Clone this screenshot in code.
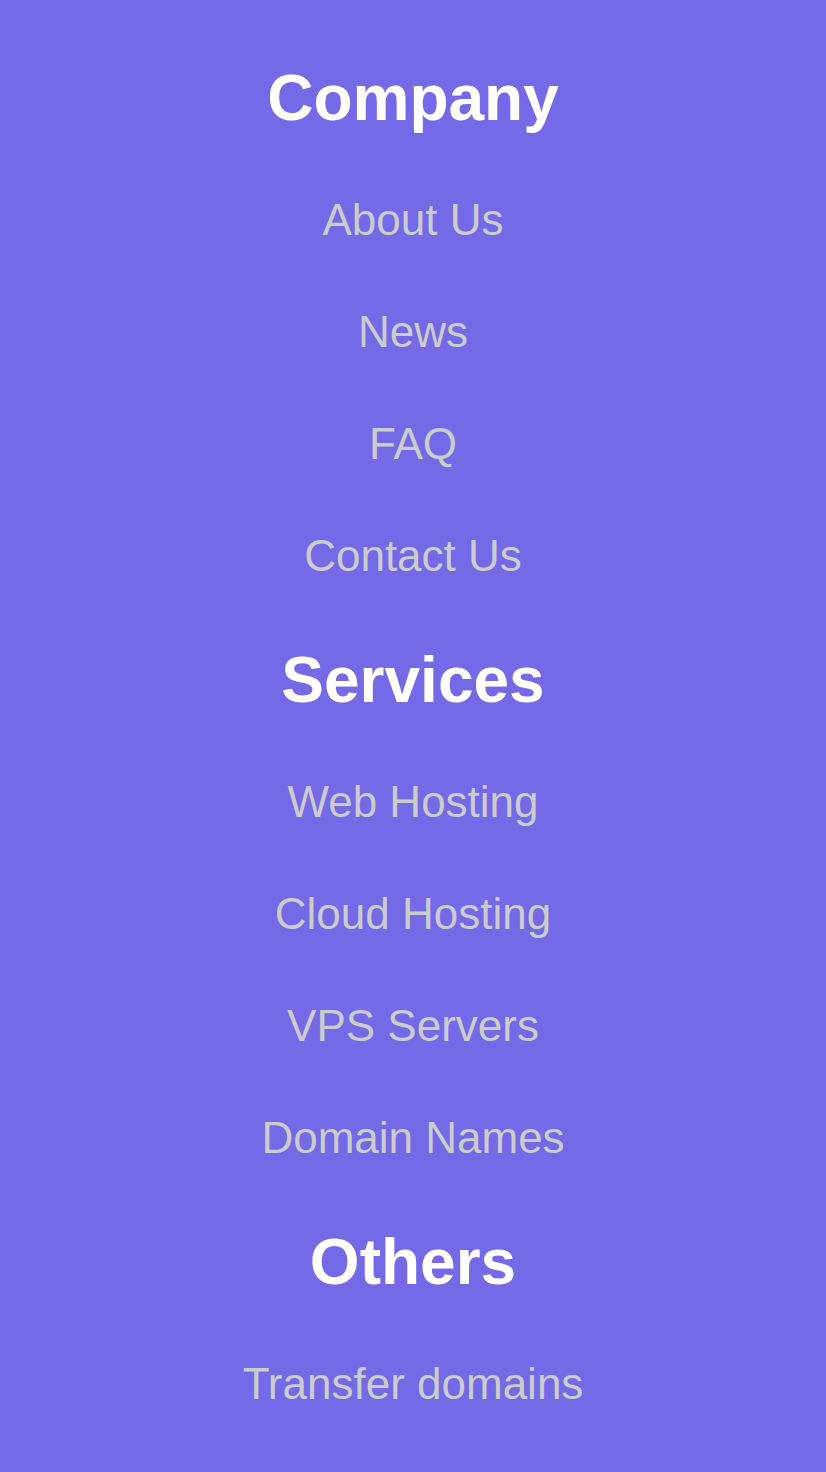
const sections = [
  { title: "Company", links: ["About Us", "News", "FAQ", "Contact Us"] },
  { title: "Services", links: ["Web Hosting", "Cloud Hosting", "VPS Servers", "Domain Names"] },
  { title: "Others", links: ["Transfer domains"] },
];

export default function App() {
  return (
    <div className="min-h-screen bg-[#7469e6] pt-[33px] text-center font-['Liberation_Sans',Arial,sans-serif]">
      {sections.map((s, i) => (
        <div key={s.title} className={i > 0 ? "mt-[3px]" : ""}>
          <h2 className="h-[131px] text-[64px] font-bold leading-[131px] text-white">{s.title}</h2>
          <ul>
            {s.links.map((l) => (
              <li key={l} className="h-[112px] text-[44px] leading-[112px]">
                <a href="#" className="text-[#cccccc]">
                  {l}
                </a>
              </li>
            ))}
          </ul>
        </div>
      ))}
    </div>
  );
}
